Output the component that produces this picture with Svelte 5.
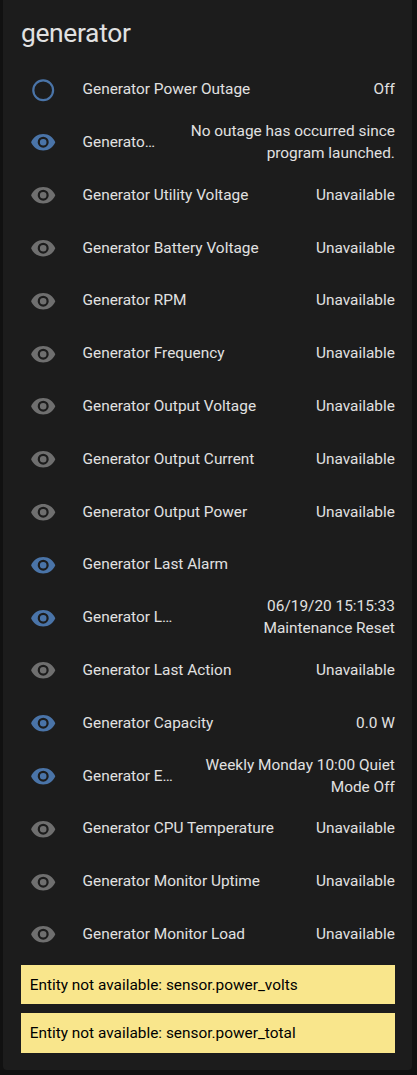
<script>
  const eye =
    'M12,9A3,3 0 0,0 9,12A3,3 0 0,0 12,15A3,3 0 0,0 15,12A3,3 0 0,0 12,9M12,17A5,5 0 0,1 7,12A5,5 0 0,1 12,7A5,5 0 0,1 17,12A5,5 0 0,1 12,17M12,4.5C7,4.5 2.73,7.61 1,12C2.73,16.39 7,19.5 12,19.5C17,19.5 21.27,16.39 23,12C21.27,7.61 17,4.5 12,4.5Z';
  const circle =
    'M12,20A8,8 0 0,1 4,12A8,8 0 0,1 12,4A8,8 0 0,1 20,12A8,8 0 0,1 12,20M12,2A10,10 0 0,0 2,12A10,10 0 0,0 12,22A10,10 0 0,0 22,12A10,10 0 0,0 12,2Z';

  let entities = [
    { name: 'Generator Power Outage', state: 'Off', icon: circle },
    { name: 'Generator Outage', state: 'No outage has occurred since program launched.' },
    { name: 'Generator Utility Voltage', state: 'Unavailable' },
    { name: 'Generator Battery Voltage', state: 'Unavailable' },
    { name: 'Generator RPM', state: 'Unavailable' },
    { name: 'Generator Frequency', state: 'Unavailable' },
    { name: 'Generator Output Voltage', state: 'Unavailable' },
    { name: 'Generator Output Current', state: 'Unavailable' },
    { name: 'Generator Output Power', state: 'Unavailable' },
    { name: 'Generator Last Alarm', state: '' },
    { name: 'Generator Last Service', state: '06/19/20 15:15:33 Maintenance Reset' },
    { name: 'Generator Last Action', state: 'Unavailable' },
    { name: 'Generator Capacity', state: '0.0 W' },
    { name: 'Generator Exercise', state: 'Weekly Monday 10:00 Quiet Mode Off' },
    { name: 'Generator CPU Temperature', state: 'Unavailable' },
    { name: 'Generator Monitor Uptime', state: 'Unavailable' },
    { name: 'Generator Monitor Load', state: 'Unavailable' }
  ];

  let missing = ['sensor.power_volts', 'sensor.power_total'];
</script>

<div class="card">
  <h1>generator</h1>
  <div class="states">
    {#each entities as entity}
      <div class="row">
        <div class="badge" class:unavailable={entity.state === 'Unavailable'}>
          <svg viewBox="0 0 24 24"><path d={entity.icon ?? eye} /></svg>
        </div>
        <div class="content">
          <div class="info">{entity.name}</div>
          <div class="state">{entity.state}</div>
        </div>
      </div>
    {/each}
    {#each missing as id}
      <div class="warning">Entity not available: {id}</div>
    {/each}
  </div>
</div>

<style>
  :global(body) {
    background: #111;
    overflow: hidden;
  }

  .card {
    box-sizing: border-box;
    width: 409.2px;
    height: 1070px;
    margin-left: 3.3px;
    padding: 0 17.6px;
    background: #1c1c1c;
    border-radius: 0 0 4px 4px;
    color: #e1e1e1;
    font-family: Roboto, sans-serif;
    font-size: 15.4px;
    line-height: 22px;
  }

  h1 {
    margin: 0;
    padding: 11px 0 12.3px;
    font-size: 26.4px;
    font-weight: 400;
    line-height: 44px;
    letter-spacing: -0.32px;
  }

  .states {
    display: flex;
    flex-direction: column;
    gap: 8.8px;
  }

  .row {
    display: flex;
    align-items: center;
    height: 44px;
  }

  .badge {
    box-sizing: border-box;
    display: flex;
    flex: none;
    align-items: center;
    justify-content: center;
    width: 44px;
    height: 44px;
    padding: 1px 0 0 0.8px;
    color: #4a74a8;
  }

  .badge.unavailable {
    color: #6f6f6f;
  }

  svg {
    width: 26.4px;
    height: 26.4px;
    fill: currentColor;
  }

  .content {
    display: flex;
    flex: 1;
    align-items: center;
    min-width: 0;
    padding-left: 17.6px;
  }

  .info {
    flex: 1 1 36.2%;
    overflow: hidden;
    white-space: nowrap;
    text-overflow: ellipsis;
  }

  .state {
    margin-left: 8.8px;
    text-align: right;
  }

  .warning {
    padding: 8.8px;
    background: #f9e68c;
    color: #000;
  }
</style>
